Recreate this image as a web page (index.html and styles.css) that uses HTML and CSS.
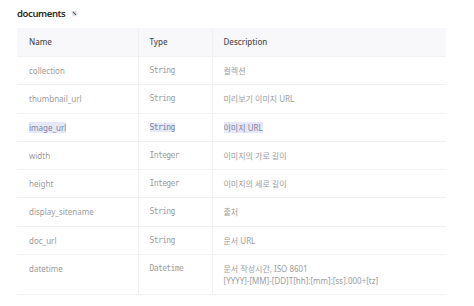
FILE: index.html
```html
<!DOCTYPE html>
<html lang="ko">

<head>
    <meta charset="utf-8">
    <meta name="viewport" content="width=device-width, initial-scale=1.0">
    <title>documents</title>
    <link rel="stylesheet" href="styles.css">
</head>

<body>
    <section class="doc">
        <h3 class="title">documents
            <svg class="anchor" width="7" height="7" viewBox="0 0 7 7">
                <circle cx="3.5" cy="3.5" r="3" fill="#e4e6ea"></circle>
                <path d="M2.2 2.2 L4.6 4.6" stroke="#555" stroke-width="1.1" stroke-linecap="round"></path>
            </svg>
        </h3>

        <table class="spec">
            <thead>
                <tr>
                    <th class="col-name">Name</th>
                    <th class="col-type">Type</th>
                    <th>Description</th>
                </tr>
            </thead>
            <tbody>
                <tr>
                    <td>collection</td>
                    <td class="mono">String</td>
                    <td>컬렉션</td>
                </tr>
                <tr>
                    <td>thumbnail_url</td>
                    <td class="mono">String</td>
                    <td>미리보기 이미지 URL</td>
                </tr>
                <tr>
                    <td><span class="mark">image_url</span></td>
                    <td class="mono"><span class="mark">String</span></td>
                    <td><span class="mark">이미지 URL</span></td>
                </tr>
                <tr>
                    <td>width</td>
                    <td class="mono">Integer</td>
                    <td>이미지의 가로 길이</td>
                </tr>
                <tr>
                    <td>height</td>
                    <td class="mono">Integer</td>
                    <td>이미지의 세로 길이</td>
                </tr>
                <tr>
                    <td>display_sitename</td>
                    <td class="mono">String</td>
                    <td>출처</td>
                </tr>
                <tr>
                    <td>doc_url</td>
                    <td class="mono">String</td>
                    <td>문서 URL</td>
                </tr>
                <tr>
                    <td>datetime</td>
                    <td class="mono">Datetime</td>
                    <td>문서 작성시간, ISO 8601<br>[YYYY]-[MM]-[DD]T[hh]:[mm]:[ss].000+[tz]</td>
                </tr>
            </tbody>
        </table>
    </section>
</body>

</html>
```

FILE: styles.css
```css
* {
    margin: 0;
    box-sizing: border-box;
}

body {
    background: #fff;
    font-family: 'Noto Sans', 'Noto Sans CJK KR', sans-serif;
}

.doc {
    padding: 5px 28px 0 17px;
}

.title {
    font-size: 9.5px;
    font-weight: 600;
    letter-spacing: -0.4px;
    color: #2b2b2b;
    height: 17px;
    line-height: 17px;
    margin-bottom: 6px;
    display: flex;
    align-items: center;
    gap: 6px;
}

.spec {
    width: 100%;
    border-collapse: collapse;
    font-size: 8px;
    line-height: 12px;
    color: #9c9c9c;
}

.spec th {
    background: #f8f8fa;
    color: #505050;
    font-weight: 500;
    text-align: left;
    padding: 8px 11px 8px;
    border-bottom: 1px solid #f1f1f3;
}

.spec td {
    padding: 8px 11px 7.3px;
    vertical-align: top;
    border-bottom: 1px solid #f1f1f3;
}

.spec th + th,
.spec td + td {
    border-left: 1px solid #f1f1f3;
}

.spec th:first-child,
.spec td:first-child {
    padding-left: 12px;
}

.col-name {
    width: 121px;
}

.col-type {
    width: 74px;
}

.mono {
    font-family: 'DejaVu Sans Mono', monospace;
    font-size: 8px;
    letter-spacing: -0.6px;
}

.mark {
    background: #e6e8f7;
    color: #7f84a0;
}
```
